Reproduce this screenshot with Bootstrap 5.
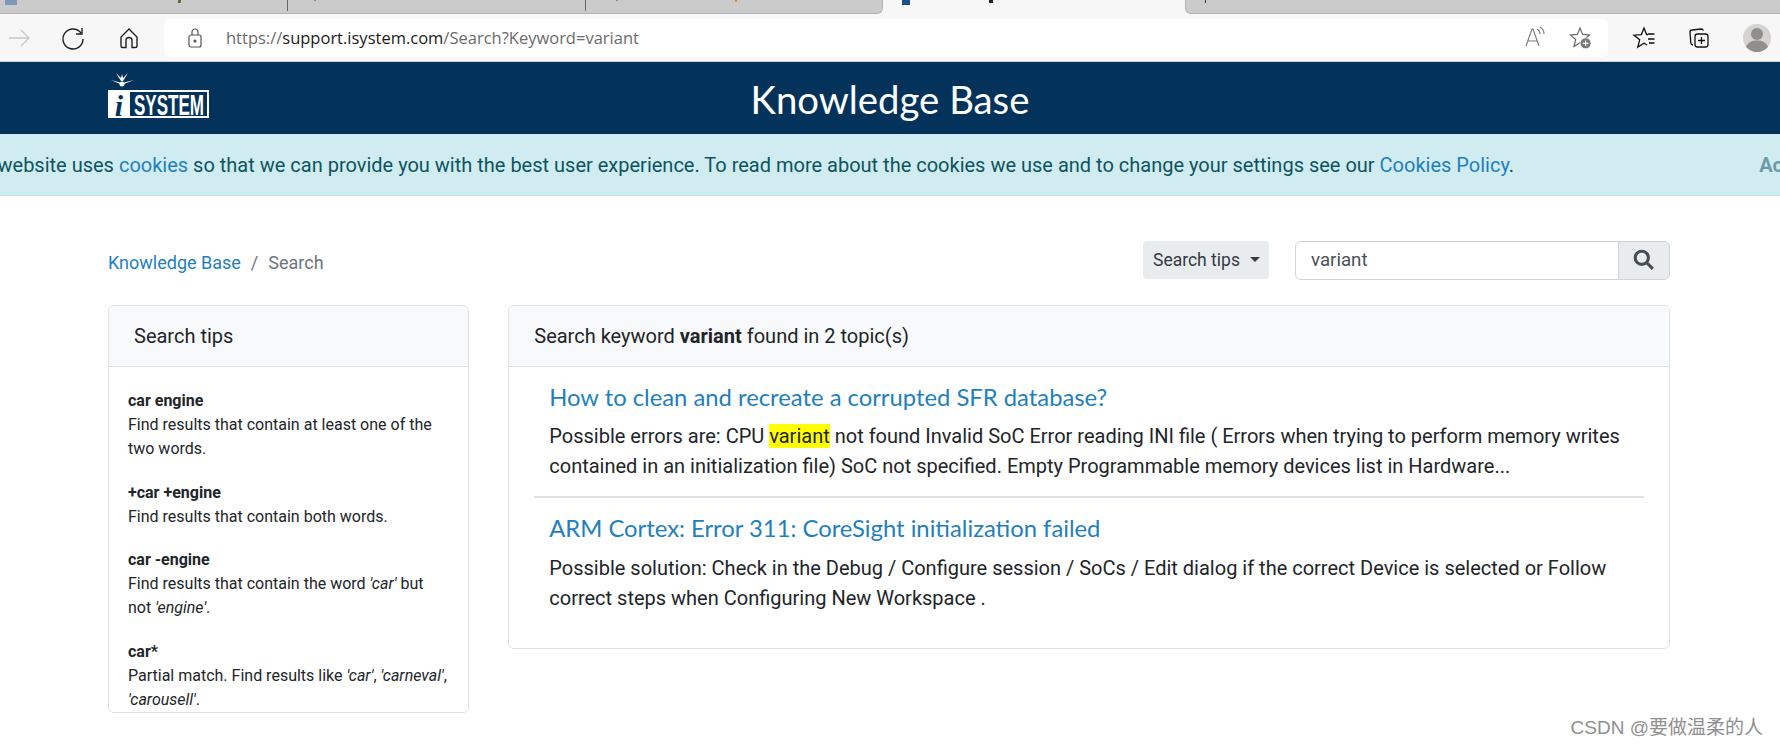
<!DOCTYPE html>
<html lang="en"><head><meta charset="utf-8"><title>Knowledge Base</title>
<link rel="stylesheet" href="https://cdn.jsdelivr.net/npm/bootstrap@5.3.0/dist/css/bootstrap.min.css">
<style>
html,body{height:745px;overflow:hidden;background:#fff}
body{font-family:Roboto,sans-serif;color:#212529;position:relative}
.tabstrip{height:14px;background:#f7f7f7;position:relative}
.tab-off{background:#cbcbcb;height:14px;border-bottom:1px solid #b4b4b4}
.tab-off.l{width:883px;border-bottom-right-radius:6px;border-right:1px solid #b4b4b4}
.tab-off.r{width:595px;border-bottom-left-radius:6px;border-left:1px solid #b4b4b4}
.tab-on{width:302px}
.stripmarks{position:absolute;left:0;top:0}
.browserbar{height:48px;background:#f7f7f7;border-bottom:1px solid #d0d0d0}
.addr{width:1444px;height:38px;left:164px;background:#fff;border-radius:6px;font-size:16.5px;color:#6b6b6b;font-family:"Open Sans",sans-serif}
.addr svg{margin:0 22px}
.addr b{font-weight:400;color:#1a1a1a}
.addr,.bbtn{position:absolute;top:19px}
.bbtn{display:flex;align-items:center;justify-content:center;width:38px;height:38px}
.site-head{height:72px;background:#03335a;padding-top:3px}
.site-head h1{font-family:Lato,sans-serif;font-size:38.3px;color:#fff;margin:0;font-weight:400}
.logo{position:absolute;left:108px;top:11px;overflow:visible}
.cookie{height:62px;background:#d1ecf1;color:#0c5460;font-size:20px;white-space:nowrap;overflow:hidden;border-bottom:1px solid #bee5eb}
.cookie .msg{margin-left:-2.5px}
.cookie a,.crumb a,.res-title{color:#1f80bd;text-decoration:none}
.cookie .acc{color:#6b9bab;font-weight:700;margin-right:-3px}
.main-wrap{width:1562px;margin-left:108px}
.tools{height:109px;padding-top:19px}
.crumb{font-size:18px;margin:4px 0 0;--bs-breadcrumb-margin-bottom:0;--bs-breadcrumb-divider-color:#6c757d;--bs-breadcrumb-item-padding-x:10px;--bs-breadcrumb-item-active-color:#6c757d}
.tool-right{gap:26px}
.tip-btn{width:126px;height:38px;background:#e9ecef;color:#343a40;font-size:17.5px;padding:0 0 0 10px;border:0;border-radius:4px;text-align:left}
.tip-btn::after{margin-left:.6em;vertical-align:.2em}
.sbox{width:375px;height:39px}
.sbox .form-control{font-size:18.7px;color:#495057;padding-left:15px;border-color:#ced4da;height:39px}
.sbox .input-group-text{width:52px;justify-content:center;background:#e9ecef;border-color:#ced4da;padding:0}
.gut{--bs-gutter-x:39px}
.panel{--bs-card-border-color:#dee2e6;--bs-card-cap-bg:#f8f9fb}
.panel .card-header{flex:none;height:61px;display:flex;align-items:center;font-size:20px;padding:0 25px}
.tips{height:408px;overflow:hidden}
.tips .card-body{padding:22px 19px 0;font-size:16px;line-height:24px}
.tips p{margin-bottom:19.7px}
.tips b{font-weight:700}
.res{height:344px}
.results{padding:0 25px;font-size:20px;line-height:30px}
.res-item{padding:12px 0 0 15px}
.res-title{font-family:Lato,sans-serif;font-size:23.8px;line-height:36px;display:block;margin-bottom:6px}
.res-item p{margin:0}
.res-item+hr+.res-item p{padding-top:1px}
.results hr{margin:15px 0 0;border-top:2px solid #dee2e6;opacity:1}
mark{background:#ff0;padding:0;color:inherit}
.wm{position:absolute;right:17px;top:712px;font:19px "Liberation Sans","Noto Sans CJK SC",sans-serif;color:#8f8f8f}
</style></head>
<body>
<div class="tabstrip d-flex"><div class="tab-off l"></div><div class="tab-on"></div><div class="tab-off r"></div>
<svg class="stripmarks" width="1780" height="14"><rect x="5" y="0" width="12" height="5" fill="#7f97b8"/><rect x="178" y="0" width="3" height="3" fill="#6b6b3a"/><rect x="287" y="0" width="1" height="11" fill="#666"/><rect x="314" y="0" width="2" height="1" fill="#888"/><rect x="585" y="0" width="1" height="11" fill="#666"/><rect x="616" y="0" width="2" height="1" fill="#888"/><rect x="735" y="0" width="2" height="2" fill="#d98b3a"/><rect x="902" y="0" width="8" height="5" fill="#1d4f8a"/><rect x="989" y="0" width="4" height="3" fill="#222"/><rect x="1205" y="0" width="1" height="3" fill="#333"/></svg>
</div>
<div class="browserbar"></div>
<svg class="bbtn" style="left:0" viewBox="0 0 38 38" fill="none" stroke="#c9c9c9" stroke-width="1.4"><path d="M9 19h19M21 11l8 8-8 8"/></svg>
<svg class="bbtn" style="left:55px" viewBox="0 0 38 38" fill="none" stroke="#222" stroke-width="1.4"><path d="M26 14a10 10 0 1 0 2 6M27 9v6h-6"/></svg>
<svg class="bbtn" style="left:110px" viewBox="0 0 38 38" fill="none" stroke="#222" stroke-width="1.4"><path d="M11 18l8-8 8 8v9a1.500 1.500 0 0 1-1.500 1.500H22v-7a3 3 0 0 0-6 0v7h-3.500A1.500 1.500 0 0 1 11 27z"/></svg>
<div class="addr d-flex align-items-center"><svg width="18" height="20" viewBox="0 0 18 20" fill="none" stroke="#555" stroke-width="1.2"><rect x="3" y="7" width="12" height="12" rx="2"/><path d="M6 7V4a3 3 0 0 1 6 0v3"/><circle cx="9" cy="13" r="1" fill="#555"/></svg><span class="addr-url">https://<b>support.isystem.com</b>/Search?Keyword=variant</span></div>
<svg class="bbtn" style="left:1515px" viewBox="0 0 38 38" fill="none" stroke="#777" stroke-width="1.1"><path d="M11 27l6-17h1l6 17M13.500 22h9M22 10c2 1 3 3 3 5M25 8c2.500 1.500 4 4 4 7"/></svg>
<svg class="bbtn" style="left:1560px" viewBox="0 0 38 38" fill="none" stroke="#666" stroke-width="1.2"><path d="M20 9L22.600 15.400 29.500 16 24.300 20.500 26 27.500 20 23.700 14 27.500 15.700 20.500 10.500 16 17.400 15.400Z"/><circle cx="25.600" cy="24.300" r="5.500" fill="#777" stroke="#fff" stroke-width=".8"/><path d="M25.600 21.500v5.600M22.800 24.300h5.600" stroke="#fff"/></svg>
<svg class="bbtn" style="left:1625px" viewBox="0 0 38 38" fill="none" stroke="#111" stroke-width="1.300"><path d="M23 15.500L21.600 15.600 19 9 16.400 15.600 9 16.200 14.700 20.800 12.800 28 19 24.200 22 26"/><path d="M23 15h6.500M23 20h6.500M24 24h5.500"/></svg>
<svg class="bbtn" style="left:1680px" viewBox="0 0 38 38" fill="none" stroke="#111" stroke-width="1.3"><path d="M13 26c-1 0-2-.8-2.200-2L10 13c0-1 .7-2 2-2l9-1c1 0 2 .5 2.500 1.500"/><rect x="15" y="15" width="13" height="13" rx="2.500"/><path d="M21.500 18v7M18 21.500h7"/></svg>
<svg class="bbtn" style="left:1738px" viewBox="0 0 38 38"><circle cx="19" cy="19" r="14" fill="#d4d3d0"/><circle cx="19" cy="15" r="6" fill="#918f8c"/><path d="M8 28c2-5 6-6.500 11-6.500S28 23 30 28c-3 3-7 5-11 5s-8-2-11-5z" fill="#918f8c"/></svg>

<header class="site-head d-flex align-items-center justify-content-center position-relative">
<svg class="logo" width="101" height="46" viewBox="0 0 101 46"><g fill="#fff"><circle cx="14" cy="11" r="2.500"/><path d="M13 8L8 0l5 5L14 1l1 4 5-5-5 8zM12 11L3 7l9 2.500zM16 11l10-4-10 2.500z"/><rect x="0" y="17" width="101" height="28"/></g><rect x="22" y="19" width="77" height="24" fill="#03335a"/><text x="11" y="43" font-family="Liberation Serif" font-style="italic" font-weight="700" font-size="30" fill="#03335a" text-anchor="middle">i</text><text x="26" y="42" font-family="Liberation Sans" font-weight="700" font-size="29" fill="#fff" textLength="70" lengthAdjust="spacingAndGlyphs">SYSTEM</text></svg>
<h1>Knowledge Base</h1>
</header>

<div class="cookie d-flex align-items-center justify-content-between"><span class="msg">website uses <a href="#">cookies</a> so that we can provide you with the best user experience. To read more about the cookies we use and to change your settings see our <a href="#">Cookies Policy</a>.</span><span class="acc">Ac</span></div>

<div class="main-wrap">
<div class="d-flex align-items-center justify-content-between tools">
<nav><ol class="breadcrumb crumb"><li class="breadcrumb-item"><a href="#">Knowledge Base</a></li><li class="breadcrumb-item active">Search</li></ol></nav>
<div class="d-flex tool-right align-items-center">
<button class="btn dropdown-toggle tip-btn">Search tips</button>
<div class="input-group sbox"><input class="form-control" value="variant"><span class="input-group-text"><svg width="22" height="22" viewBox="0 0 20 20" fill="none" stroke="#454d55" stroke-width="2.800"><circle cx="8" cy="8" r="6"/><path d="M12.500 12.500L18 18"/></svg></span></div>
</div>
</div>
<div class="row gut">
<div class="col-3"><div class="card panel tips"><div class="card-header">Search tips</div><div class="card-body">
<p><b>car engine</b><br>Find results that contain at least one of the two words.</p>
<p><b>+car +engine</b><br>Find results that contain both words.</p>
<p><b>car -engine</b><br>Find results that contain the word <i>'car'</i> but not <i>'engine'</i>.</p>
<p><b>car*</b><br>Partial match. Find results like <i>'car'</i>, <i>'carneval'</i>, <i>'carousell'</i>.</p>
</div></div></div>
<div class="col-9"><div class="card panel res"><div class="card-header"><span>Search keyword <b>variant</b> found in 2 topic(s)</span></div>
<div class="results">
<div class="res-item"><a class="res-title" href="#">How to clean and recreate a corrupted SFR database?</a><p>Possible errors are: CPU <mark>variant</mark> not found Invalid SoC Error reading INI file ( Errors when trying to perform memory writes contained in an initialization file) SoC not specified. Empty Programmable memory devices list in Hardware...</p></div>
<hr>
<div class="res-item"><a class="res-title" href="#">ARM Cortex: Error 311: CoreSight initialization failed</a><p>Possible solution: Check in the Debug / Configure session / SoCs / Edit dialog if the correct Device is selected or Follow correct steps when Configuring New Workspace .</p></div>
</div></div></div>
</div>
</div>
<div class="wm">CSDN @要做温柔的人</div>
<script src="https://cdn.jsdelivr.net/npm/bootstrap@5.3.0/dist/js/bootstrap.bundle.min.js"></script>
</body></html>
